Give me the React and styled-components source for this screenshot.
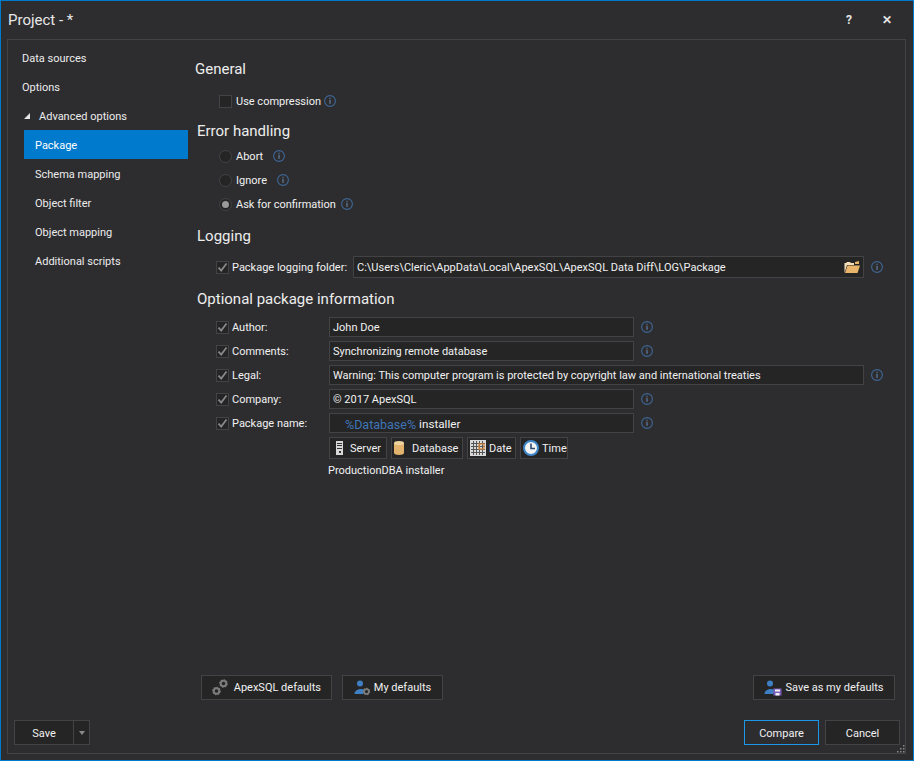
import React from 'react';
import styled, { createGlobalStyle } from 'styled-components';

const GlobalStyle = createGlobalStyle`
  html, body { margin: 0; padding: 0; background: #2d2d30; }
  * { box-sizing: border-box; }
`;

const Window = styled.div`
  width: 914px;
  height: 761px;
  display: flex;
  flex-direction: column;
  background: #2d2d30;
  border: 1px solid #007acc;
  color: #f1f1f1;
  font-family: Roboto, "Open Sans", sans-serif;
  font-size: 11px;
  overflow: hidden;
`;

const TitleBar = styled.div`
  height: 38px;
  flex: none;
  display: flex;
  align-items: center;
  padding: 0 7px;
`;

const Title = styled.div`
  flex: 1;
  font-size: 15px;
  color: #e8e8e8;
`;

const TitleButton = styled.div`
  width: 38px;
  height: 38px;
  display: flex;
  align-items: center;
  justify-content: center;
  font-weight: 700;
  font-size: 12px;
  color: #e4e4e4;
`;

const Panel = styled.div`
  flex: 1;
  display: flex;
  flex-direction: column;
  margin: 0 7px 6px 6px;
  border: 1px solid #434346;
  position: relative;
`;

const Main = styled.div`
  flex: 1;
  display: flex;
  min-height: 0;
`;

const Sidebar = styled.div`
  width: 180px;
  flex: none;
  padding-top: 3px;
`;

const NavItem = styled.div`
  height: 29px;
  display: flex;
  align-items: center;
  margin-left: ${p => (p.$child ? '16px' : '0')};
  padding-top: 1px;
  padding-left: ${p => (p.$child ? '11px' : '14px')};
  background: ${p => (p.$active ? '#007acc' : 'transparent')};
  color: ${p => (p.$active ? '#ffffff' : '#ececec')};
`;

const Arrow = styled.span`
  width: 0;
  height: 0;
  border-style: solid;
  border-width: 0 0 6px 6px;
  border-color: transparent transparent #e6e6e6 transparent;
  margin-right: 9px;
  margin-left: 2px;
`;

const Content = styled.div`
  flex: 1;
  display: flex;
  flex-direction: column;
  padding-top: 18px;
  min-width: 0;
`;

const Heading = styled.div`
  height: 22px;
  line-height: 22px;
  font-size: 15px;
  color: #ededed;
  margin-left: ${p => p.$left || 9}px;
  margin-top: ${p => p.$top || 0}px;
`;

const OptionRow = styled.div`
  display: flex;
  align-items: center;
  height: ${p => p.$height || 24}px;
  margin-top: ${p => p.$top || 0}px;
  padding-left: ${p => p.$left || 31}px;
`;

const Stack = styled.div`
  display: flex;
  flex-direction: column;
  gap: 4px;
  margin-top: 7px;
  padding-left: 28px;
`;

const FormRow = styled.div`
  display: flex;
  align-items: center;
  height: 20px;
`;

const CheckLabel = styled.div`
  width: ${p => p.$width || 113}px;
  flex: none;
  display: flex;
  align-items: center;
`;

const CheckBoxFrame = styled.span`
  width: 13px;
  height: 13px;
  flex: none;
  display: flex;
  align-items: center;
  justify-content: center;
  border: 1px solid #434346;
  background: #252526;
  margin-right: ${p => p.$gap || 3}px;
`;

const RadioFrame = styled.span`
  width: 13px;
  height: 13px;
  flex: none;
  display: flex;
  align-items: center;
  justify-content: center;
  border: 1px solid #434346;
  border-radius: 50%;
  background: #252526;
  margin-right: 4px;
`;

const RadioDot = styled.span`
  width: 7px;
  height: 7px;
  border-radius: 50%;
  background: #9a9a9a;
`;

const InputBox = styled.div`
  width: ${p => p.$width}px;
  height: ${p => p.$height || 20}px;
  flex: none;
  display: flex;
  align-items: center;
  justify-content: ${p => (p.$start ? 'flex-start' : 'space-between')};
  background: #252526;
  border: 1px solid #434346;
  padding: 0 3px;
  color: #f1f1f1;
  white-space: nowrap;
`;

const RichBox = styled(InputBox)`
  font-size: 11.7px;
  padding-top: 2px;
`;

const Token = styled.span`
  color: #3f74b5;
  font-size: 12.5px;
  margin-left: 12px;
  margin-right: 3px;
`;

const InfoWrap = styled.span`
  display: inline-flex;
  margin-left: ${p => p.$left || 7}px;
`;

const TokenRow = styled.div`
  display: flex;
  gap: 4px;
  margin-left: 113px;
  height: 22px;
`;

const TokenButton = styled.div`
  width: ${p => p.$width}px;
  display: flex;
  align-items: center;
  gap: ${p => p.$gap || 5}px;
  padding-left: ${p => p.$pad || 2}px;
  background: #252526;
  border: 1px solid #434346;
`;

const Preview = styled.div`
  margin: 4px 0 0 140px;
  height: 16px;
  line-height: 16px;
`;

const DefaultsRow = styled.div`
  display: flex;
  margin-top: auto;
  padding: 0 10px 0 13px;
`;

const ActionButton = styled.div`
  width: ${p => p.$width}px;
  height: 25px;
  flex: none;
  display: flex;
  align-items: center;
  justify-content: center;
  gap: 3px;
  margin-left: ${p => p.$left || 0}px;
  background: #252526;
  border: 1px solid #434346;
  color: #f1f1f1;
`;

const Spacer = styled.div`
  flex: 1;
`;

const BottomBar = styled.div`
  display: flex;
  align-items: center;
  margin-top: 20px;
  padding: 0 5px 8px 6px;

  ${ActionButton} {
    padding-top: 1px;
  }
`;

const SaveButton = styled(ActionButton)`
  border-right: none;
`;

const SaveDrop = styled.div`
  width: 17px;
  height: 25px;
  display: flex;
  align-items: center;
  justify-content: center;
  background: #252526;
  border: 1px solid #434346;
`;

const DropArrow = styled.span`
  width: 0;
  height: 0;
  border-style: solid;
  border-width: 4px 3.5px 0 3.5px;
  border-color: #8a8a8a transparent transparent transparent;
`;

const CompareButton = styled(ActionButton)`
  background: #2d2d30;
  border-color: #1c97ea;
`;

const Grip = styled.svg`
  position: absolute;
  right: 0;
  bottom: 0;
`;

const InfoIcon = () => (
  <svg width="12" height="12" viewBox="0 0 12 12">
    <circle cx="6" cy="6" r="5.4" fill="none" stroke="#3f6797" strokeWidth="1.1" />
    <rect x="5.5" y="2.8" width="1" height="1" fill="#6c8fb8" />
    <rect x="5.5" y="4.8" width="1" height="4" fill="#6c8fb8" />
  </svg>
);

const Check = () => (
  <svg width="11" height="11" viewBox="0 0 11 11">
    <path d="M1.5 5.6 L4.2 8.6 L9.5 1.5" fill="none" stroke="#8a8a8a" strokeWidth="1.7" />
  </svg>
);

const CheckBox = ({ checked, gap }) => (
  <CheckBoxFrame $gap={gap}>{checked && <Check />}</CheckBoxFrame>
);

const FolderIcon = () => (
  <svg width="16" height="14" viewBox="0 0 16 14">
    <path d="M0.5 13 V3 H2 L3 2 H6 L7 3 H10 V5 H3 L0.5 13 Z" fill="#f3e0b8" />
    <path d="M11 2 L15 1 V4 H11 Z" fill="#e8b56a" />
    <path d="M1 13 L3.5 5.5 H16 L13.5 13 Z" fill="#e8b56a" />
  </svg>
);

const ServerIcon = () => (
  <svg width="7" height="14" viewBox="0 0 7 14">
    <rect width="7" height="14" fill="#d8d8d8" />
    <rect x="1" y="2" width="5" height="1" fill="#333" />
    <rect x="1" y="4" width="5" height="1" fill="#333" />
    <rect x="1" y="7" width="5" height="1" fill="#333" />
    <rect x="3" y="10" width="2" height="2" fill="#333" />
  </svg>
);

const DatabaseIcon = () => (
  <svg width="10" height="14" viewBox="0 0 10 14">
    <path d="M0 2 V12 C0 14.5 10 14.5 10 12 V2 Z" fill="#e2b36c" />
    <ellipse cx="5" cy="2" rx="5" ry="2" fill="#efd39f" />
  </svg>
);

const DateIcon = () => (
  <svg width="16" height="16" viewBox="0 0 16 16">
    <rect width="16" height="16" fill="#d9d9d9" />
    {[3, 6, 9, 12].map(x => <rect key={x} x={x} y="1" width="1" height="14" fill="#555" />)}
    {[3, 6, 9, 12].map(y => <rect key={y} x="1" y={y} width="14" height="1" fill="#555" />)}
    <rect x="9" y="4" width="5" height="5" fill="none" stroke="#e08a3c" strokeWidth="1.2" />
  </svg>
);

const TimeIcon = () => (
  <svg width="16" height="16" viewBox="0 0 16 16">
    <circle cx="8" cy="8" r="7" fill="#f4f4f4" stroke="#3f86c9" strokeWidth="2" />
    <path d="M8 3.5 V8.5 H12" fill="none" stroke="#2a4a70" strokeWidth="1.6" />
  </svg>
);

const Gear = ({ x, y, r }) => (
  <g>
    <circle cx={x} cy={y} r={r} fill="none" stroke="#7c7c7c" strokeWidth={r * 0.7} />
    <circle cx={x} cy={y} r={r * 1.3} fill="none" stroke="#7c7c7c" strokeWidth={r * 0.5} strokeDasharray="1.4 1.4" />
  </g>
);

const GearsIcon = () => (
  <svg width="16" height="17" viewBox="0 0 16 17">
    <Gear x={4.5} y={12} r={2.8} />
    <Gear x={11.5} y={4.5} r={2.8} />
  </svg>
);

const UserShape = () => (
  <>
    <circle cx="6" cy="3.5" r="3" fill="#3f7fc4" />
    <path d="M0.5 14 C0.5 8.5 10 7.5 11 11 L9 14 Z" fill="#3f7fc4" />
  </>
);

const UserGearIcon = () => (
  <svg width="17" height="16" viewBox="0 0 17 16">
    <UserShape />
    <Gear x={12.5} y={11.5} r={2.4} />
  </svg>
);

const UserSaveIcon = () => (
  <svg width="18" height="16" viewBox="0 0 18 16">
    <UserShape />
    <rect x="9.5" y="8.5" width="8" height="7" fill="#7b5cb8" />
    <rect x="11" y="9.5" width="5" height="2" fill="#f2f2f2" />
    <rect x="11.5" y="13" width="4" height="2.5" fill="#f2f2f2" />
  </svg>
);

const GripIcon = () => (
  <Grip width="9" height="9" viewBox="0 0 9 9">
    {[[7, 1], [4, 4], [7, 4], [1, 7], [4, 7], [7, 7]].map(([x, y]) => (
      <rect key={`${x}-${y}`} x={x} y={y} width="1.5" height="1.5" fill="#8a8a8a" />
    ))}
  </Grip>
);

const navItems = [
  { label: 'Data sources' },
  { label: 'Options' },
  { label: 'Advanced options', arrow: true },
  { label: 'Package', child: true, active: true },
  { label: 'Schema mapping', child: true },
  { label: 'Object filter', child: true },
  { label: 'Object mapping', child: true },
  { label: 'Additional scripts', child: true },
];

const fields = [
  { label: 'Author:', value: 'John Doe', width: 305 },
  { label: 'Comments:', value: 'Synchronizing remote database', width: 305 },
  { label: 'Legal:', value: 'Warning: This computer program is protected by copyright law and international treaties', width: 535 },
  { label: 'Company:', value: '© 2017 ApexSQL', width: 305 },
];

export default function App() {
  return (
    <Window>
      <GlobalStyle />
      <TitleBar>
        <Title>Project - *</Title>
        <TitleButton>?</TitleButton>
        <TitleButton>✕</TitleButton>
      </TitleBar>
      <Panel>
        <Main>
          <Sidebar>
            {navItems.map(item => (
              <NavItem key={item.label} $child={item.child} $active={item.active}>
                {item.arrow && <Arrow />}
                {item.label}
              </NavItem>
            ))}
          </Sidebar>
          <Content>
            <Heading $left={7}>General</Heading>
            <OptionRow $height={20} $top={11}>
              <CheckBox gap={4} />
              Use compression
              <InfoWrap $left={3}><InfoIcon /></InfoWrap>
            </OptionRow>
            <Heading $top={9}>Error handling</Heading>
            <OptionRow $top={2}>
              <RadioFrame />
              Abort
              <InfoWrap $left={10}><InfoIcon /></InfoWrap>
            </OptionRow>
            <OptionRow>
              <RadioFrame />
              Ignore
              <InfoWrap $left={10}><InfoIcon /></InfoWrap>
            </OptionRow>
            <OptionRow>
              <RadioFrame><RadioDot /></RadioFrame>
              Ask for confirmation
              <InfoWrap $left={5}><InfoIcon /></InfoWrap>
            </OptionRow>
            <Heading $top={9}>Logging</Heading>
            <OptionRow $height={22} $top={9} $left={28}>
              <CheckBox checked />
              <CheckLabel $width={121}>Package logging folder:</CheckLabel>
              <InputBox $width={511} $height={22}>
                C:\Users\Cleric\AppData\Local\ApexSQL\ApexSQL Data Diff\LOG\Package
                <FolderIcon />
              </InputBox>
              <InfoWrap><InfoIcon /></InfoWrap>
            </OptionRow>
            <Heading $top={10}>Optional package information</Heading>
            <Stack>
              {fields.map(f => (
                <FormRow key={f.label}>
                  <CheckLabel><CheckBox checked />{f.label}</CheckLabel>
                  <InputBox $width={f.width}>{f.value}</InputBox>
                  <InfoWrap><InfoIcon /></InfoWrap>
                </FormRow>
              ))}
              <FormRow>
                <CheckLabel><CheckBox checked />Package name:</CheckLabel>
                <RichBox $width={305} $start>
                  <Token>%Database%</Token>installer
                </RichBox>
                <InfoWrap><InfoIcon /></InfoWrap>
              </FormRow>
              <TokenRow>
                <TokenButton $width={58} $pad={6} $gap={7}><ServerIcon />Server</TokenButton>
                <TokenButton $width={72} $pad={2} $gap={8}><DatabaseIcon />Database</TokenButton>
                <TokenButton $width={49} $pad={2} $gap={3}><DateIcon />Date</TokenButton>
                <TokenButton $width={48} $pad={2} $gap={3}><TimeIcon />Time</TokenButton>
              </TokenRow>
            </Stack>
            <Preview>ProductionDBA installer</Preview>
            <DefaultsRow>
              <ActionButton $width={131}><GearsIcon />&nbsp;ApexSQL defaults</ActionButton>
              <ActionButton $width={101} $left={10}><UserGearIcon />My defaults</ActionButton>
              <Spacer />
              <ActionButton $width={142}><UserSaveIcon />Save as my defaults</ActionButton>
            </DefaultsRow>
          </Content>
        </Main>
        <BottomBar>
          <SaveButton $width={59}>Save</SaveButton>
          <SaveDrop><DropArrow /></SaveDrop>
          <Spacer />
          <CompareButton $width={75}>Compare</CompareButton>
          <ActionButton $width={75} $left={6}>Cancel</ActionButton>
        </BottomBar>
        <GripIcon />
      </Panel>
    </Window>
  );
}
